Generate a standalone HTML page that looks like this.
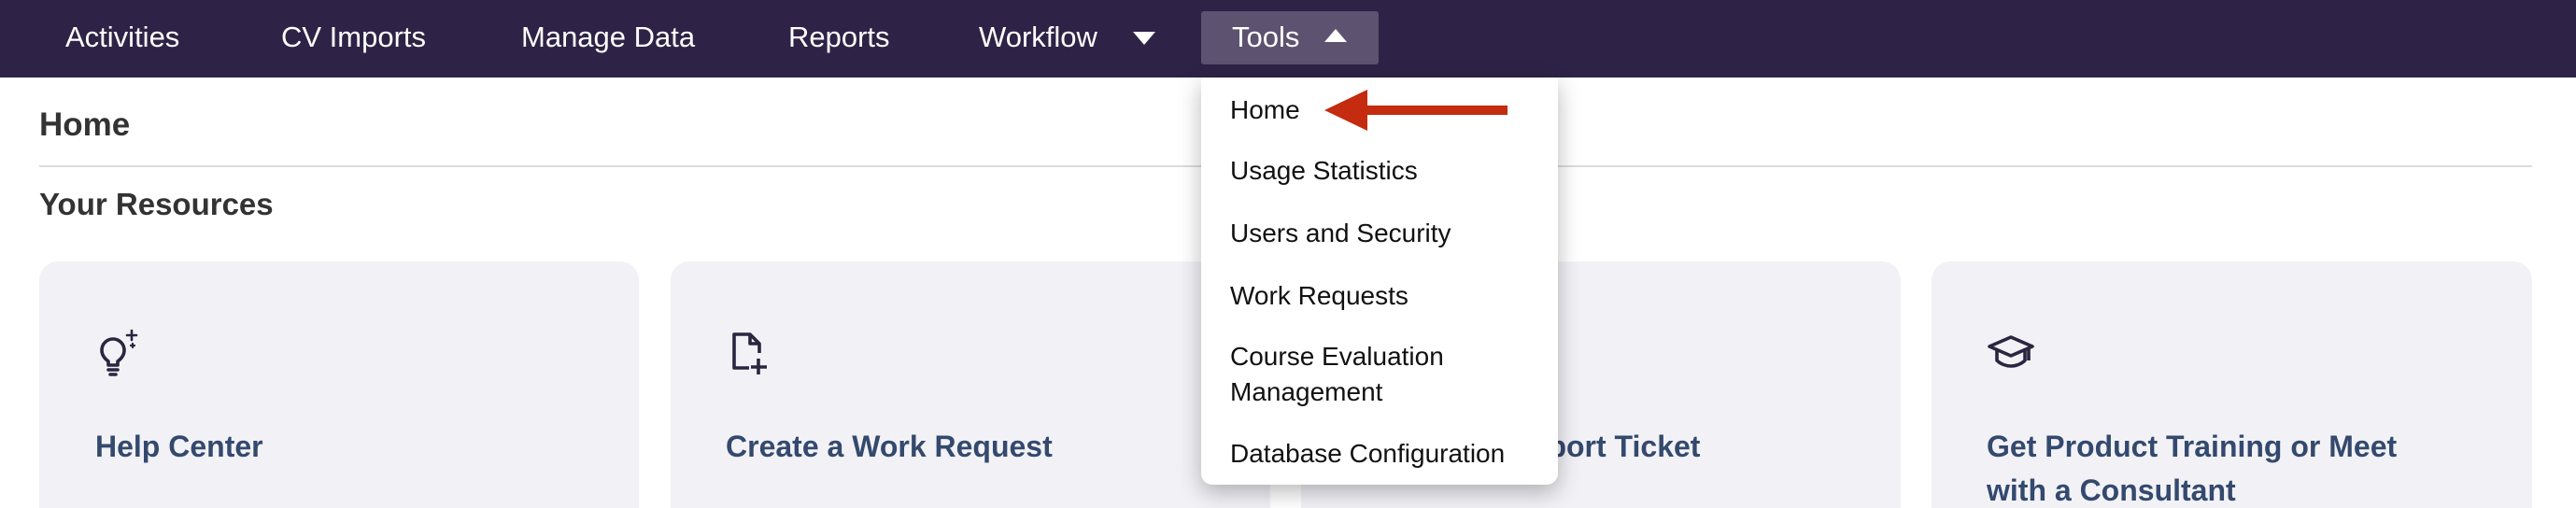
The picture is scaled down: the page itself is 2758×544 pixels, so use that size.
<!DOCTYPE html>
<html><head><meta charset="utf-8"><style>
*{margin:0;padding:0;box-sizing:border-box}
html,body{width:2758px;height:544px;overflow:hidden}
body{background:#fff;font-family:"Liberation Sans",sans-serif;position:relative}
.nav{position:absolute;left:0;top:0;width:2758px;height:83px;background:#2e2346}
.ni{position:absolute;top:21px;color:#fff;font-size:31px;line-height:38px}
.tools{position:absolute;left:1286px;top:12px;width:190px;height:57px;background:#5d5270;border-radius:3px}
h1{position:absolute;left:42px;top:114px;font-size:35px;color:#333;font-weight:bold}
.hr{position:absolute;left:42px;top:177px;width:2669px;height:2px;background:#dcdcdc}
h2{position:absolute;left:42px;top:200px;font-size:33px;color:#333;font-weight:bold}
.card{position:absolute;top:280px;height:264px;width:642px;background:#f2f2f6;border-radius:20px 20px 0 0}
.ct{position:absolute;top:455px;font-size:32px;font-weight:bold;color:#34496e;line-height:47px}
.dd{position:absolute;left:1286px;top:83px;width:382px;height:436px;background:#fff;border-radius:0 0 12px 12px;box-shadow:0 8px 24px rgba(0,0,0,.28)}
.di{position:absolute;left:31px;font-size:28px;color:#111;line-height:38px}
</style></head><body>
<div class="nav">
<div class="tools"></div>
<div class="ni" style="left:70px">Activities</div>
<div class="ni" style="left:301px">CV Imports</div>
<div class="ni" style="left:558px">Manage Data</div>
<div class="ni" style="left:844px">Reports</div>
<div class="ni" style="left:1048px">Workflow</div>
<svg style="position:absolute;left:1212px;top:32px" width="26" height="18"><path d="M1 2H25L13 16Z" fill="#fff"/></svg>
<div class="ni" style="left:1319px">Tools</div>
<svg style="position:absolute;left:1417px;top:29px" width="26" height="18"><path d="M1 16H25L13 2Z" fill="#fff"/></svg>
</div>
<h1>Home</h1>
<div class="hr"></div>
<h2>Your Resources</h2>
<div class="card" style="left:42px"></div>
<div class="card" style="left:718px"></div>
<div class="card" style="left:1393px"></div>
<div class="card" style="left:2068px;width:643px"></div>
<svg style="position:absolute;left:100px;top:350px" width="60" height="56" fill="none" stroke="#2b2540" stroke-width="3.6" stroke-linecap="round" stroke-linejoin="round">
<path d="M16 41v-4c-4-3-7-7-7-12a12 12 0 0 1 24 0c0 5-3 9-7 12v4zM16 46h10M18 51h6"/><path d="M41 4v10M36 9h10" stroke-width="2.6"/><path d="M42 18v4M40 20h4" stroke-width="2.2"/></svg>
<svg style="position:absolute;left:780px;top:354px" width="52" height="52" fill="none" stroke="#2b2540" stroke-width="3.6" stroke-linejoin="round">
<path d="M22 40H6V4h17l10 10v10M23 4v10h10M32 30v17M24 39h17"/></svg>
<svg style="position:absolute;left:2126px;top:356px" width="56" height="46" fill="none" stroke="#2b2540" stroke-width="3.6" stroke-linejoin="round">
<path d="M4 15L27 5l23 10-23 10zM12 19v11c4 4 10 6 15 6s11-2 15-6V19M46 17v13"/></svg>
<div class="ct" style="left:102px">Help Center</div>
<div class="ct" style="left:777px">Create a Work Request</div>
<div class="ct" style="left:1453px">Submit a Support Ticket</div>
<div class="ct" style="left:2127px">Get Product Training or Meet<br>with a Consultant</div>
<div class="dd">
<div class="di" style="top:16px">Home</div>
<div class="di" style="top:81px">Usage Statistics</div>
<div class="di" style="top:148px">Users and Security</div>
<div class="di" style="top:215px">Work Requests</div>
<div class="di" style="top:280px">Course Evaluation<br>Management</div>
<div class="di" style="top:384px">Database Configuration</div>
</div>
<svg style="position:absolute;left:1410px;top:92px" width="210" height="52"><path d="M8 26L54 4V21H204V31H54V48Z" fill="#c42b0f"/></svg>
</body></html>
